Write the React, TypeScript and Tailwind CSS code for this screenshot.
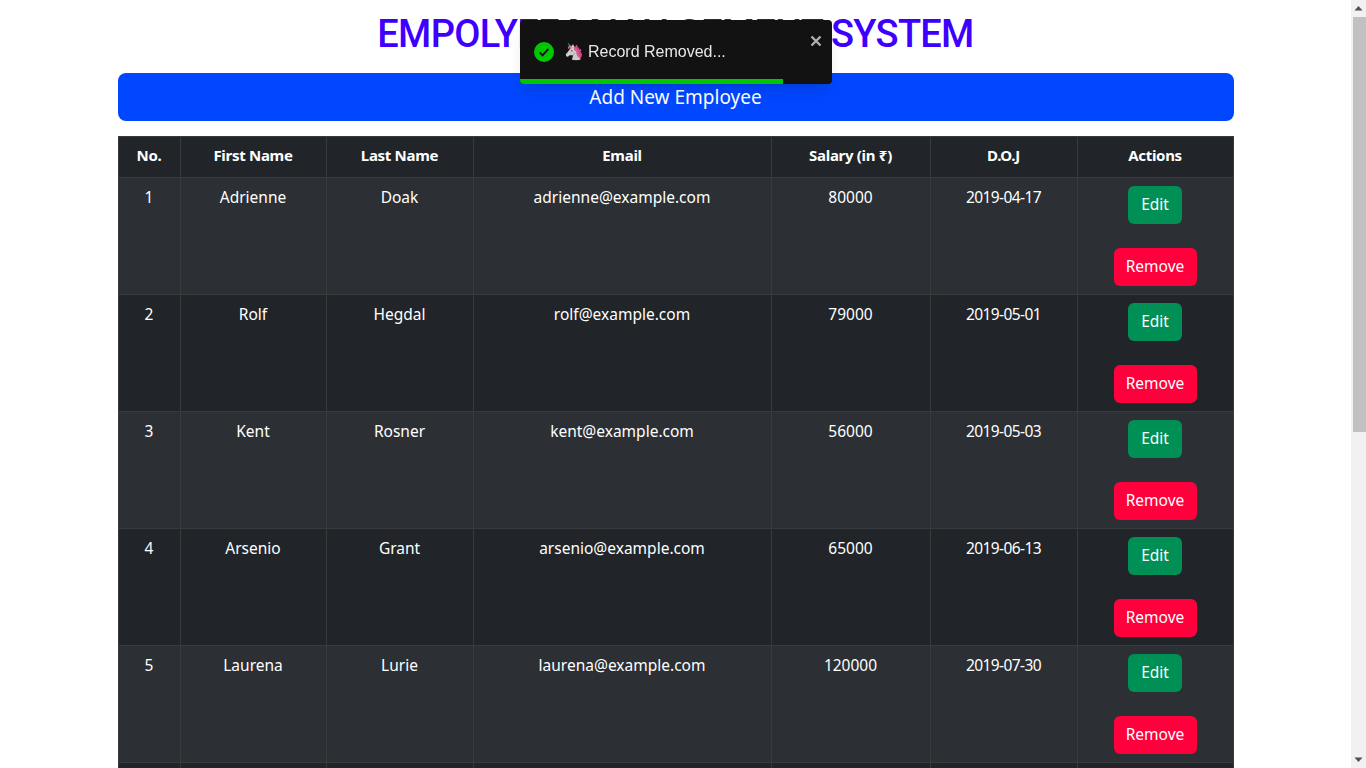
import React from "react";

const rows = [
  ["1", "Adrienne", "Doak", "adrienne@example.com", "80000", "2019-04-17"],
  ["2", "Rolf", "Hegdal", "rolf@example.com", "79000", "2019-05-01"],
  ["3", "Kent", "Rosner", "kent@example.com", "56000", "2019-05-03"],
  ["4", "Arsenio", "Grant", "arsenio@example.com", "65000", "2019-06-13"],
  ["5", "Laurena", "Lurie", "laurena@example.com", "120000", "2019-07-30"],
  ["6", "George", "Pipps", "george@example.com", "67000", "2019-08-15"],
  ["7", "Jeffrey", "Lang", "jeffrey@example.com", "93000", "2019-09-02"],
  ["8", "Mina", "Castle", "mina@example.com", "71000", "2019-10-21"],
  ["9", "Peter", "Hale", "peter@example.com", "58000", "2019-11-11"],
  ["10", "Sara", "Quinn", "sara@example.com", "88000", "2019-12-05"],
];
const heads = ["No.", "First Name", "Last Name", "Email", "Salary (in ₹)", "D.O.J", "Actions"];

export default function App() {
  return (
    <div className="font-['Noto_Sans',sans-serif] bg-white w-[1351px] min-h-[1358px]">
      <div className="mx-auto w-[1140px] px-3">
        <h1 className="font-['Roboto',sans-serif] text-center text-[38px] tracking-[-0.7px] leading-[48px] font-medium text-[#3d00ff] pt-[10px] mb-[15px]">
          EMPOLYEE MANAGEMENT SYSTEM
        </h1>
        <button className="block w-full h-12 rounded-lg bg-[#0047ff] text-white text-[19px] mb-[15px]">
          Add New Employee
        </button>
        <table className="w-[1115px] table-fixed border-collapse text-white text-center text-[15.5px]">
          <colgroup>
            <col className="w-[62px]" />
            <col className="w-[146px]" />
            <col className="w-[147px]" />
            <col className="w-[298px]" />
            <col className="w-[159px]" />
            <col className="w-[147px]" />
            <col className="w-[156px]" />
          </colgroup>
          <thead>
            <tr className="bg-[#212529] h-[41px]">
              {heads.map((h) => (
                <th key={h} className="border border-[#373b3e] text-[15px] tracking-[-0.3px] font-bold align-middle pb-[3px]">
                  {h}
                </th>
              ))}
            </tr>
          </thead>
          <tbody>
            {rows.map((r, i) => (
              <tr key={r[0]} className={i % 2 === 0 ? "bg-[#2c3034] h-[117px]" : "bg-[#212529] h-[117px]"}>
                {r.map((c, j) => (
                  <td
                    key={j}
                    className={
                      j === 5
                        ? "border border-[#373b3e] align-top pt-[7px] leading-6 tracking-[-0.6px]"
                        : "border border-[#373b3e] align-top pt-[7px] leading-6"
                    }
                  >
                    {c}
                  </td>
                ))}
                <td className="border border-[#373b3e] align-top pt-2">
                  <div className="flex flex-col items-center gap-6">
                    <button className="h-[38px] w-[54px] rounded-md bg-[#008f55] text-white">Edit</button>
                    <button className="h-[38px] w-[83px] rounded-md bg-[#ff003c] text-white">Remove</button>
                  </div>
                </td>
              </tr>
            ))}
          </tbody>
        </table>
      </div>
      <div className="fixed top-5 left-[520px] w-[312px] h-16 rounded bg-[#121212] overflow-hidden shadow-lg font-['Liberation_Sans',sans-serif] flex items-center pl-[14px]">
        <svg width="20" height="20" viewBox="0 0 20 20" className="shrink-0">
          <circle cx="10" cy="10" r="10" fill="#00c800" />
          <path d="M5.6 10.4l3 3 5.8-6.6" fill="none" stroke="#121212" strokeWidth="1.8" />
        </svg>
        <span className="ml-[9.5px] text-base text-white/90">🦄 Record Removed...</span>
        <span className="absolute right-[9px] top-[13px] text-[#b0b0b0]">
          <svg width="14" height="16" viewBox="0 0 14 16">
            <path d="M2.5 3.5l9 9M11.5 3.5l-9 9" stroke="currentColor" strokeWidth="2.4" />
          </svg>
        </span>
        <div className="absolute left-0 bottom-0 h-[5px] w-[263px] bg-[#00c800]" />
      </div>
      <div className="fixed top-0 right-0 w-[15px] h-[768px] bg-[#f1f1f1]">
        <svg width="15" height="17" viewBox="0 0 15 17" className="absolute top-0 left-0">
          <path d="M3.5 10.5h8L7.5 6z" fill="#505050" />
        </svg>
        <div className="absolute top-[17px] left-[2px] w-[13px] h-[415px] bg-[#c1c1c1]" />
        <svg width="15" height="17" viewBox="0 0 15 17" className="absolute bottom-0 left-0">
          <path d="M3.5 6.5h8L7.5 11z" fill="#505050" />
        </svg>
      </div>
    </div>
  );
}
